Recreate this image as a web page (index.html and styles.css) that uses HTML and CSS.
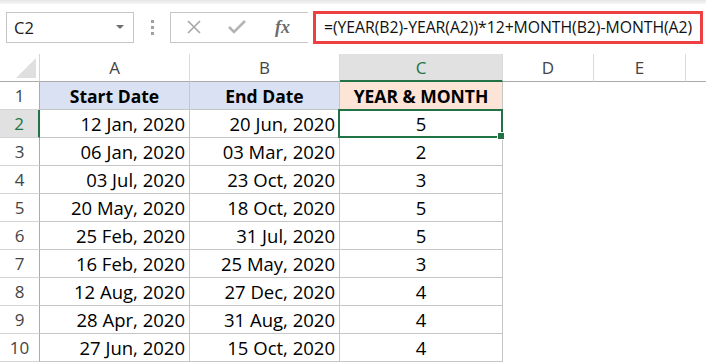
FILE: index.html
```html
<!DOCTYPE html>
<html>
<head>
    <meta charset="UTF-8">
    <link rel="stylesheet" href="styles.css">
</head>
<body>
<div class="top-strip"></div>

<div class="toolbar">
    <div class="name-box">
        <span>C2</span>
        <span class="drop"></span>
    </div>
    <div class="dots"><i></i><i></i><i></i></div>
    <div class="fx-box">
        <svg class="ico" width="18" height="18" viewBox="0 0 18 18">
            <path d="M3 3 L15 15 M15 3 L3 15" stroke="#a6a6a6" stroke-width="1.6" fill="none"/>
        </svg>
        <svg class="ico" width="20" height="18" viewBox="0 0 20 18">
            <path d="M2 9 L7 14 L18 3" stroke="#b4b4b4" stroke-width="2.6" fill="none"/>
        </svg>
        <span class="fx">fx</span>
    </div>
    <div class="formula">=(YEAR(B2)-YEAR(A2))*12+MONTH(B2)-MONTH(A2)</div>
</div>

<div class="sheet">
    <div class="corner"><span class="tri"></span></div>
    <div class="col-head">A</div>
    <div class="col-head">B</div>
    <div class="col-head active">C</div>
    <div class="col-head">D</div>
    <div class="col-head">E</div>
    <div class="col-head last"></div>

    <div class="row-head">1</div>
    <div class="cell title blue">Start Date</div>
    <div class="cell title blue">End Date</div>
    <div class="cell title peach">YEAR &amp; MONTH</div>
    <div class="empty"></div><div class="empty"></div><div class="empty"></div>

    <div class="row-head active">2</div>
    <div class="cell date">12 Jan, 2020</div>
    <div class="cell date">20 Jun, 2020</div>
    <div class="cell num selected">5</div>
    <div class="empty"></div><div class="empty"></div><div class="empty"></div>

    <div class="row-head">3</div>
    <div class="cell date">06 Jan, 2020</div>
    <div class="cell date">03 Mar, 2020</div>
    <div class="cell num">2</div>
    <div class="empty"></div><div class="empty"></div><div class="empty"></div>

    <div class="row-head">4</div>
    <div class="cell date">03 Jul, 2020</div>
    <div class="cell date">23 Oct, 2020</div>
    <div class="cell num">3</div>
    <div class="empty"></div><div class="empty"></div><div class="empty"></div>

    <div class="row-head">5</div>
    <div class="cell date">20 May, 2020</div>
    <div class="cell date">18 Oct, 2020</div>
    <div class="cell num">5</div>
    <div class="empty"></div><div class="empty"></div><div class="empty"></div>

    <div class="row-head">6</div>
    <div class="cell date">25 Feb, 2020</div>
    <div class="cell date">31 Jul, 2020</div>
    <div class="cell num">5</div>
    <div class="empty"></div><div class="empty"></div><div class="empty"></div>

    <div class="row-head">7</div>
    <div class="cell date">16 Feb, 2020</div>
    <div class="cell date">25 May, 2020</div>
    <div class="cell num">3</div>
    <div class="empty"></div><div class="empty"></div><div class="empty"></div>

    <div class="row-head">8</div>
    <div class="cell date">12 Aug, 2020</div>
    <div class="cell date">27 Dec, 2020</div>
    <div class="cell num">4</div>
    <div class="empty"></div><div class="empty"></div><div class="empty"></div>

    <div class="row-head">9</div>
    <div class="cell date">28 Apr, 2020</div>
    <div class="cell date">31 Aug, 2020</div>
    <div class="cell num">4</div>
    <div class="empty"></div><div class="empty"></div><div class="empty"></div>

    <div class="row-head">10</div>
    <div class="cell date">27 Jun, 2020</div>
    <div class="cell date">15 Oct, 2020</div>
    <div class="cell num">4</div>
    <div class="empty"></div><div class="empty"></div><div class="empty"></div>
</div>
</body>
</html>
```

FILE: styles.css
```css
* {
    margin: 0;
    padding: 0;
    box-sizing: border-box;
}

body {
    background-color: #ffffff;
    font-family: "Open Sans", "Liberation Sans", sans-serif;
    color: #000000;
    overflow: hidden;
}

.top-strip {
    height: 4px;
    background: linear-gradient(#e6e6e6, #f7f7f7);
}

/* formula bar */
.toolbar {
    display: flex;
    align-items: center;
    height: 32px;
    margin-top: 7px;
    padding-left: 6px;
}

.toolbar .name-box {
    display: flex;
    align-items: center;
    justify-content: space-between;
    width: 128px;
    height: 31px;
    border: 1px solid #c6c6c6;
    padding: 0 9px 0 7px;
    font-size: 16.5px;
    color: #1a1a1a;
}

.toolbar .drop {
    width: 0;
    height: 0;
    border-left: 4px solid transparent;
    border-right: 4px solid transparent;
    border-top: 4px solid #6d6d6d;
}

.toolbar .dots {
    display: flex;
    flex-direction: column;
    gap: 3px;
    margin-left: 17px;
    margin-right: 16px;
}

.toolbar .dots i {
    display: block;
    width: 3px;
    height: 3px;
    background-color: #a0a0a0;
}

.toolbar .fx-box {
    display: flex;
    align-items: center;
    width: 138px;
    height: 31px;
    border: 1px solid #c6c6c6;
    border-right: none;
    padding-left: 14px;
    gap: 24px;
}

.toolbar .fx {
    font-family: "Liberation Serif", serif;
    font-style: italic;
    font-weight: bold;
    font-size: 18px;
    color: #6b6b6b;
    margin-left: 4px;
}

.toolbar .formula {
    flex: 1;
    height: 33px;
    margin-right: 3px;
    margin-left: 5px;
    border: 3px solid #ee3f43;
    padding-left: 8px;
    line-height: 27px;
    font-size: 15.8px;
    letter-spacing: -0.05px;
    white-space: nowrap;
    overflow: hidden;
    color: #111111;
}

/* grid */
.sheet {
    display: grid;
    grid-template-columns: 40px 150px 150px 163px 91px 92px 1fr;
    grid-auto-rows: 28px;
    margin-top: 11px;
    font-size: 18.5px;
}

.sheet .corner {
    position: relative;
    border-right: 1px solid #d4d4d4;
    border-bottom: 1px solid #ababab;
}

.sheet .corner .tri {
    position: absolute;
    right: 3px;
    bottom: 3px;
    width: 0;
    height: 0;
    border-left: 20px solid transparent;
    border-bottom: 20px solid #dfdfdf;
}

.sheet .col-head {
    display: flex;
    align-items: center;
    justify-content: center;
    border-right: 1px solid #d9d9d9;
    border-bottom: 1px solid #ababab;
    color: #444444;
    font-size: 17px;
}

.sheet .col-head.last {
    border-right: none;
}

.sheet .col-head.active {
    background-color: #e1e1e1;
    border-bottom: 2px solid #217346;
    color: #217346;
}

.sheet .row-head {
    display: flex;
    align-items: center;
    justify-content: center;
    border-right: 1px solid #ababab;
    border-bottom: 1px solid #d4d4d4;
    color: #444444;
    font-size: 17px;
}

.sheet .row-head.active {
    background-color: #e1e1e1;
    border-right: 2px solid #217346;
    color: #217346;
}

.sheet .cell {
    display: flex;
    align-items: center;
    border-right: 1px solid #c6c6c6;
    border-bottom: 1px solid #c6c6c6;
    white-space: nowrap;
}

.sheet .cell.title {
    justify-content: center;
    font-weight: bold;
    font-size: 17.5px;
}

.sheet .cell.blue {
    background-color: #d9e1f2;
}

.sheet .cell.peach {
    background-color: #fce4d6;
}

.sheet .cell.date {
    justify-content: flex-end;
    padding-right: 4px;
}

.sheet .cell.num {
    justify-content: center;
}

.sheet .cell.selected {
    position: relative;
}

.sheet .cell.selected::after {
    content: "";
    position: absolute;
    left: -2px;
    top: -1px;
    right: -1px;
    bottom: -1px;
    border: 2px solid #217346;
}

.sheet .cell.selected::before {
    content: "";
    position: absolute;
    right: -3px;
    bottom: -3px;
    width: 6px;
    height: 6px;
    background-color: #217346;
    border: 1px solid #ffffff;
    z-index: 1;
}
```
